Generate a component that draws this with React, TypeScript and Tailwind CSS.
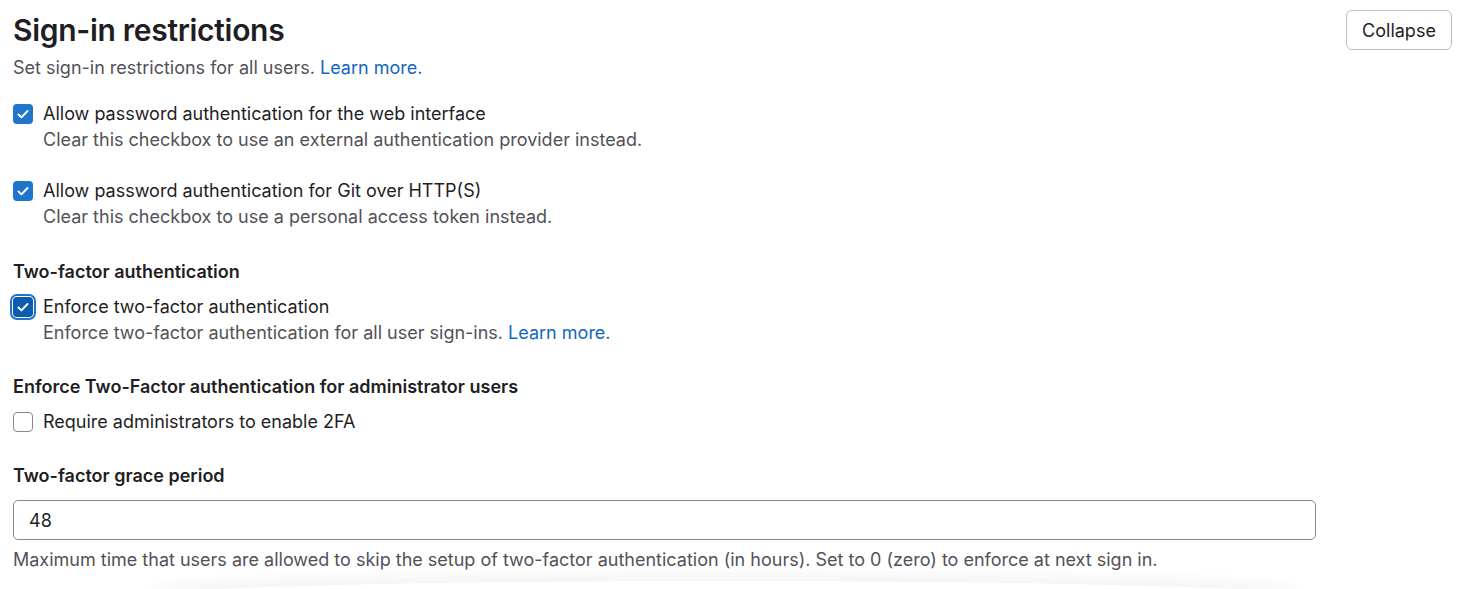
import React from "react";

function Check({ checked, focused }: { checked: boolean; focused?: boolean }) {
  return (
    <span className="relative mt-[3px] flex h-[20px] w-[20px] shrink-0 items-center justify-center">
      {focused && (
        <span className="absolute -inset-[3px] rounded-[7px] border-2 border-[#1f75cb]" />
      )}
      {checked ? (
        <span
          className={
            "flex h-[20px] w-[20px] items-center justify-center rounded-[4px] " +
            (focused ? "bg-[#0b5cad] ring-1 ring-white" : "bg-[#1f75cb]")
          }
        >
          <svg width="14" height="14" viewBox="0 0 16 16" fill="none">
            <path d="M2.8 8.6l3.4 3.3L13.2 4.6" stroke="white" strokeWidth="2.2" strokeLinecap="round" strokeLinejoin="round" />
          </svg>
        </span>
      ) : (
        <span className="h-[20px] w-[20px] rounded-[4px] border border-[#89888d] bg-white" />
      )}
    </span>
  );
}

function CheckRow({
  checked,
  focused,
  label,
  help,
}: {
  checked: boolean;
  focused?: boolean;
  label: string;
  help?: React.ReactNode;
}) {
  return (
    <div className="flex gap-[10px]">
      <Check checked={checked} focused={focused} />
      <div className="flex flex-col">
        <span className="text-[18px] leading-[26px] text-[#1f1e24]">{label}</span>
        {help && <span className="text-[18px] leading-[26px] text-[#535158]">{help}</span>}
      </div>
    </div>
  );
}

export default function App() {
  return (
    <div
      className="relative min-h-[589px] overflow-hidden bg-white pl-[13px] pr-[8px]"
      style={{ fontFamily: "Inter, 'Noto Sans', sans-serif" }}
    >
      <div className="flex items-start justify-between">
        <div className="flex flex-col">
          <h2 className="mt-[12px] text-[30px] font-semibold leading-[36px] tracking-[-0.01em] text-[#1f1e24]">
            Sign-in restrictions
          </h2>
          <p className="mt-[8px] text-[18px] leading-[24px] text-[#535158]">
            Set sign-in restrictions for all users. <span className="text-[#1068bf]">Learn more.</span>
          </p>
        </div>
        <button className="mt-[10px] h-[40px] w-[106px] rounded-[6px] border border-[#bfbfc3] bg-white text-[18px] text-[#1f1e24]">
          Collapse
        </button>
      </div>

      <div className="mt-[21px]">
        <CheckRow
          checked
          label="Allow password authentication for the web interface"
          help="Clear this checkbox to use an external authentication provider instead."
        />
      </div>
      <div className="mt-[25px]">
        <CheckRow
          checked
          label="Allow password authentication for Git over HTTP(S)"
          help="Clear this checkbox to use a personal access token instead."
        />
      </div>

      <h3 className="mt-[30px] text-[18px] font-semibold leading-[24px] text-[#1f1e24]">Two-factor authentication</h3>
      <div className="mt-[10px]">
        <CheckRow
          checked
          focused
          label="Enforce two-factor authentication"
          help={
            <>
              Enforce two-factor authentication for all user sign-ins.{" "}
              <span className="text-[#1068bf]">Learn more.</span>
            </>
          }
        />
      </div>

      <h3 className="mt-[29px] text-[18px] font-semibold leading-[24px] text-[#1f1e24]">
        Enforce Two-Factor authentication for administrator users
      </h3>
      <div className="mt-[10px]">
        <CheckRow checked={false} label="Require administrators to enable 2FA" />
      </div>

      <h3 className="mt-[29px] text-[18px] font-semibold leading-[24px] text-[#1f1e24]">Two-factor grace period</h3>
      <div className="mt-[12px] flex h-[40px] w-[1303px] items-center rounded-[5px] border border-[#89888d] px-[15px] text-[18px] text-[#1f1e24]">
        48
      </div>
      <p className="mt-[8px] text-[18px] leading-[24px] text-[#535158]">
        Maximum time that users are allowed to skip the setup of two-factor authentication (in hours). Set to 0 (zero)
        to enforce at next sign in.
      </p>

      <div className="pointer-events-none absolute bottom-[-22px] left-[150px] right-[160px] h-[30px] rounded-[50%] shadow-[0_-6px_14px_rgba(0,0,0,0.05)]" />
    </div>
  );
}
